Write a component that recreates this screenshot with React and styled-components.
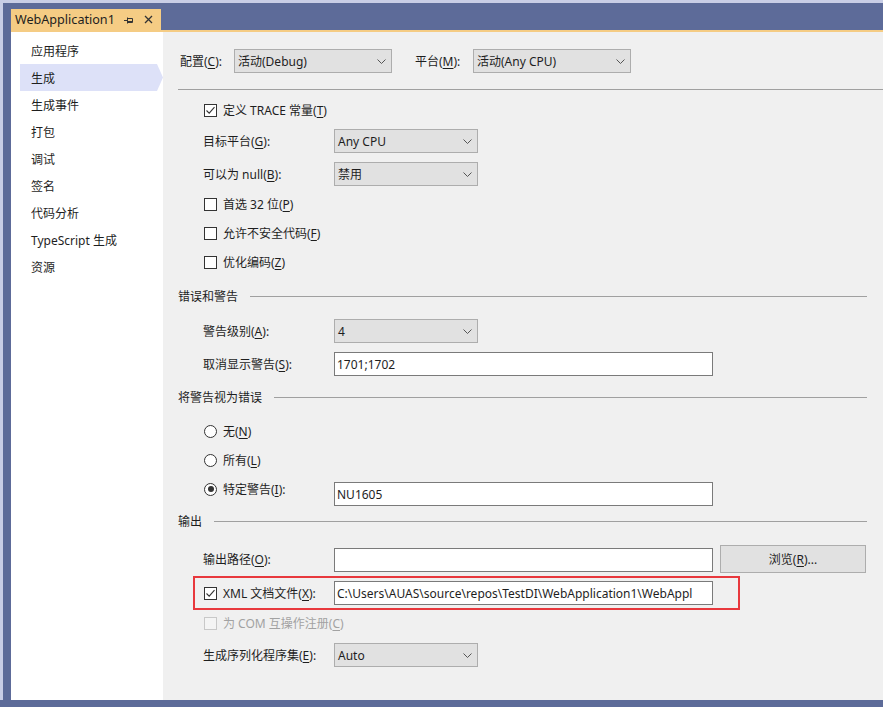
import styled, { createGlobalStyle } from 'styled-components';

const GlobalStyle = createGlobalStyle`
  html, body {
    margin: 0;
    padding: 0;
  }
  body {
    font-family: "Noto Sans", "Noto Sans CJK SC", sans-serif;
    font-size: 12px;
    color: #1e1e1e;
  }
  u {
    text-decoration-thickness: 1px;
    text-underline-offset: 2px;
  }
`;

const Frame = styled.div`
  width: 883px;
  height: 707px;
  display: grid;
  grid-template-rows: 3px 27px 2px 1fr 7px;
  background: linear-gradient(to right, #c9cee6 0 3px, #5d6b99 3px);
  overflow: hidden;
`;

const TopStrip = styled.div`
  background: #c9cee6;
`;

const TabBar = styled.div`
  display: flex;
  align-items: flex-end;
  padding-left: 11px;
`;

const Tab = styled.div`
  width: 150px;
  height: 21px;
  box-sizing: border-box;
  background: #f5cc84;
  display: flex;
  align-items: center;
  padding-left: 4px;
  color: #1e1e1e;
`;

const TabTitle = styled.span`
  flex: 1;
  font-size: 12.6px;
`;

const TabIcon = styled.span`
  display: flex;
  align-items: center;
  margin-right: ${p => p.$mr}px;
`;

const AccentLine = styled.div`
  margin-left: 11px;
  background: #f5cc84;
`;

const Body = styled.div`
  display: flex;
  padding-left: 11px;
  min-height: 0;
`;

const Sidebar = styled.div`
  width: 152px;
  flex-shrink: 0;
  background: #fff;
  padding-top: 5px;
  box-sizing: border-box;
`;

const NavItem = styled.div`
  height: 27px;
  margin-left: 9px;
  padding-left: 11px;
  display: flex;
  align-items: center;
  background: ${p => (p.$active ? '#dde1f8' : 'transparent')};
  clip-path: polygon(0 0, calc(100% - 6px) 0, 100% 50%, calc(100% - 6px) 100%, 0 100%);
`;

const Content = styled.div`
  flex: 1;
  background: #f0f0f0;
  padding: 17px 0 0 15px;
  box-sizing: border-box;
`;

const TopRow = styled.div`
  display: flex;
  align-items: center;
  height: 24px;
  margin-left: 2px;
`;

const TopLabel = styled.span`
  width: ${p => p.$w}px;
  margin-left: ${p => p.$ml || 0}px;
  flex-shrink: 0;
  white-space: nowrap;
`;

const Separator = styled.div`
  height: 1px;
  background: #a0a0a0;
  margin-top: 16px;
`;

const Section = styled.div`
  display: flex;
  align-items: center;
  height: 20px;
  margin-top: ${p => p.$mt}px;
  margin-right: 16px;
  white-space: nowrap;

  &::after {
    content: '';
    flex: 1;
    height: 1px;
    margin-left: 12px;
    background: #a0a0a0;
  }
`;

const Row = styled.div`
  display: flex;
  align-items: center;
  height: ${p => p.$h || 20}px;
  margin-top: ${p => p.$mt || 0}px;
  margin-left: 25px;
  white-space: nowrap;
`;

const Label = styled.span`
  width: 131px;
  flex-shrink: 0;
`;

const Choice = styled.label`
  display: flex;
  align-items: center;
  gap: 6px;
  width: ${p => (p.$w ? `${p.$w}px` : 'auto')};
  flex-shrink: 0;
  margin-left: 1px;
  color: ${p => (p.$disabled ? '#a2a2a2' : 'inherit')};
  ${p => p.$top && 'align-self: flex-start; height: 14px;'}
`;

const Box = styled.span`
  width: 13px;
  height: 13px;
  box-sizing: border-box;
  border: 1px solid ${p => (p.$disabled ? '#c8c8c8' : '#333')};
  background: ${p => (p.$disabled ? '#f4f4f4' : '#fff')};
  display: flex;
  align-items: center;
  justify-content: center;
  flex-shrink: 0;
`;

const Radio = styled.span`
  width: 13px;
  height: 13px;
  box-sizing: border-box;
  border: 1px solid #333;
  border-radius: 50%;
  background: #fff;
  display: flex;
  align-items: center;
  justify-content: center;
  flex-shrink: 0;

  &::after {
    content: '';
    display: ${p => (p.$on ? 'block' : 'none')};
    width: 6px;
    height: 6px;
    border-radius: 50%;
    background: #333;
  }
`;

const ComboBox = styled.div`
  width: ${p => p.$w}px;
  height: 24px;
  box-sizing: border-box;
  border: 1px solid #adadad;
  background: #e1e1e1;
  display: flex;
  align-items: center;
  padding: 0 5px 0 3px;
  flex-shrink: 0;
`;

const ComboText = styled.span`
  flex: 1;
`;

const TextBox = styled.div`
  width: 379px;
  height: 24px;
  box-sizing: border-box;
  border: 1px solid #7a7a7a;
  background: #fff;
  display: flex;
  align-items: center;
  padding-left: 2px;
  overflow: hidden;
  white-space: nowrap;
  flex-shrink: 0;
  ${p => p.$shift && 'align-self: flex-end; margin-bottom: 1px;'}
`;

const Button = styled.div`
  width: 146px;
  height: 28px;
  box-sizing: border-box;
  margin-left: 7px;
  border: 1px solid #adadad;
  background: #e1e1e1;
  display: flex;
  align-items: center;
  justify-content: center;
`;

const Highlight = styled.div`
  width: 547px;
  height: 34px;
  box-sizing: border-box;
  margin: 3px 0 0 15px;
  border: 2px solid #e8383d;
  display: flex;
  align-items: center;
  padding-left: 8px;
  white-space: nowrap;
`;

const BottomStrip = styled.div`
  background: #5d6b99;
`;

function Chevron() {
  return (
    <svg width="9" height="5" viewBox="0 0 9 5">
      <path d="M0.5 0.5 L4.5 4.5 L8.5 0.5" fill="none" stroke="#555" strokeWidth="1" />
    </svg>
  );
}

function Check() {
  return (
    <svg width="11" height="11" viewBox="0 0 11 11">
      <path d="M1.5 5.5 L4.2 8.2 L9.5 2.2" fill="none" stroke="#333" strokeWidth="1.1" />
    </svg>
  );
}

function Combo({ w, children }) {
  return (
    <ComboBox $w={w}>
      <ComboText>{children}</ComboText>
      <Chevron />
    </ComboBox>
  );
}

function CheckItem({ checked, disabled, w, children }) {
  return (
    <Choice $w={w} $disabled={disabled}>
      <Box $disabled={disabled}>{checked && <Check />}</Box>
      <span>{children}</span>
    </Choice>
  );
}

const navItems = ['应用程序', '生成', '生成事件', '打包', '调试', '签名', '代码分析', 'TypeScript 生成', '资源'];

export default function App() {
  return (
    <>
      <GlobalStyle />
      <Frame>
        <TopStrip />
        <TabBar>
          <Tab>
            <TabTitle>WebApplication1</TabTitle>
            <TabIcon $mr={10}>
              <svg width="10" height="10" viewBox="0 0 10 10">
                <path d="M0 5.5H3.5M3.5 2.5V8.5M3.5 3.5H8.5V7.5H3.5M4 6.5H8.5" fill="none" stroke="#333" strokeWidth="1" />
              </svg>
            </TabIcon>
            <TabIcon $mr={8}>
              <svg width="9" height="9" viewBox="0 0 9 9">
                <path d="M1 1L8 8M8 1L1 8" stroke="#333" strokeWidth="1.3" />
              </svg>
            </TabIcon>
          </Tab>
        </TabBar>
        <AccentLine />
        <Body>
          <Sidebar>
            {navItems.map(item => (
              <NavItem key={item} $active={item === '生成'}>
                {item}
              </NavItem>
            ))}
          </Sidebar>
          <Content>
            <TopRow>
              <TopLabel $w={54}>
                配置(<u>C</u>):
              </TopLabel>
              <Combo w={158}>活动(Debug)</Combo>
              <TopLabel $w={58} $ml={23}>
                平台(<u>M</u>):
              </TopLabel>
              <Combo w={158}>活动(Any CPU)</Combo>
            </TopRow>
            <Separator />

            <Row $mt={10}>
              <CheckItem checked>
                定义 TRACE 常量(<u>T</u>)
              </CheckItem>
            </Row>
            <Row $h={24} $mt={9}>
              <Label>
                目标平台(<u>G</u>):
              </Label>
              <Combo w={144}>Any CPU</Combo>
            </Row>
            <Row $h={24} $mt={9}>
              <Label>
                可以为 null(<u>B</u>):
              </Label>
              <Combo w={144}>禁用</Combo>
            </Row>
            <Row $mt={8}>
              <CheckItem>
                首选 32 位(<u>P</u>)
              </CheckItem>
            </Row>
            <Row $mt={9}>
              <CheckItem>
                允许不安全代码(<u>F</u>)
              </CheckItem>
            </Row>
            <Row $mt={9}>
              <CheckItem>
                优化编码(<u>Z</u>)
              </CheckItem>
            </Row>

            <Section $mt={14}>错误和警告</Section>
            <Row $h={24} $mt={13}>
              <Label>
                警告级别(<u>A</u>):
              </Label>
              <Combo w={144}>4</Combo>
            </Row>
            <Row $h={24} $mt={9}>
              <Label>
                取消显示警告(<u>S</u>):
              </Label>
              <TextBox>1701;1702</TextBox>
            </Row>

            <Section $mt={11}>将警告视为错误</Section>
            <Row $mt={14}>
              <Choice>
                <Radio />
                <span>
                  无(<u>N</u>)
                </span>
              </Choice>
            </Row>
            <Row $mt={9}>
              <Choice>
                <Radio />
                <span>
                  所有(<u>L</u>)
                </span>
              </Choice>
            </Row>
            <Row $h={24} $mt={12}>
              <Choice $w={130} $top>
                <Radio $on />
                <span>
                  特定警告(<u>I</u>):
                </span>
              </Choice>
              <TextBox>NU1605</TextBox>
            </Row>

            <Section $mt={5}>输出</Section>
            <Row $h={28} $mt={14}>
              <Label>
                输出路径(<u>O</u>):
              </Label>
              <TextBox $shift />
              <Button>
                浏览(<u>R</u>)...
              </Button>
            </Row>
            <Highlight>
              <CheckItem checked w={130}>
                XML 文档文件(<u>X</u>):
              </CheckItem>
              <TextBox>C:\Users\AUAS\source\repos\TestDI\WebApplication1\WebAppl</TextBox>
            </Highlight>
            <Row $mt={3}>
              <CheckItem disabled>
                为 COM 互操作注册(<u>C</u>)
              </CheckItem>
            </Row>
            <Row $h={24} $mt={10}>
              <Label>
                生成序列化程序集(<u>E</u>):
              </Label>
              <Combo w={144}>Auto</Combo>
            </Row>
          </Content>
        </Body>
        <BottomStrip />
      </Frame>
    </>
  );
}
